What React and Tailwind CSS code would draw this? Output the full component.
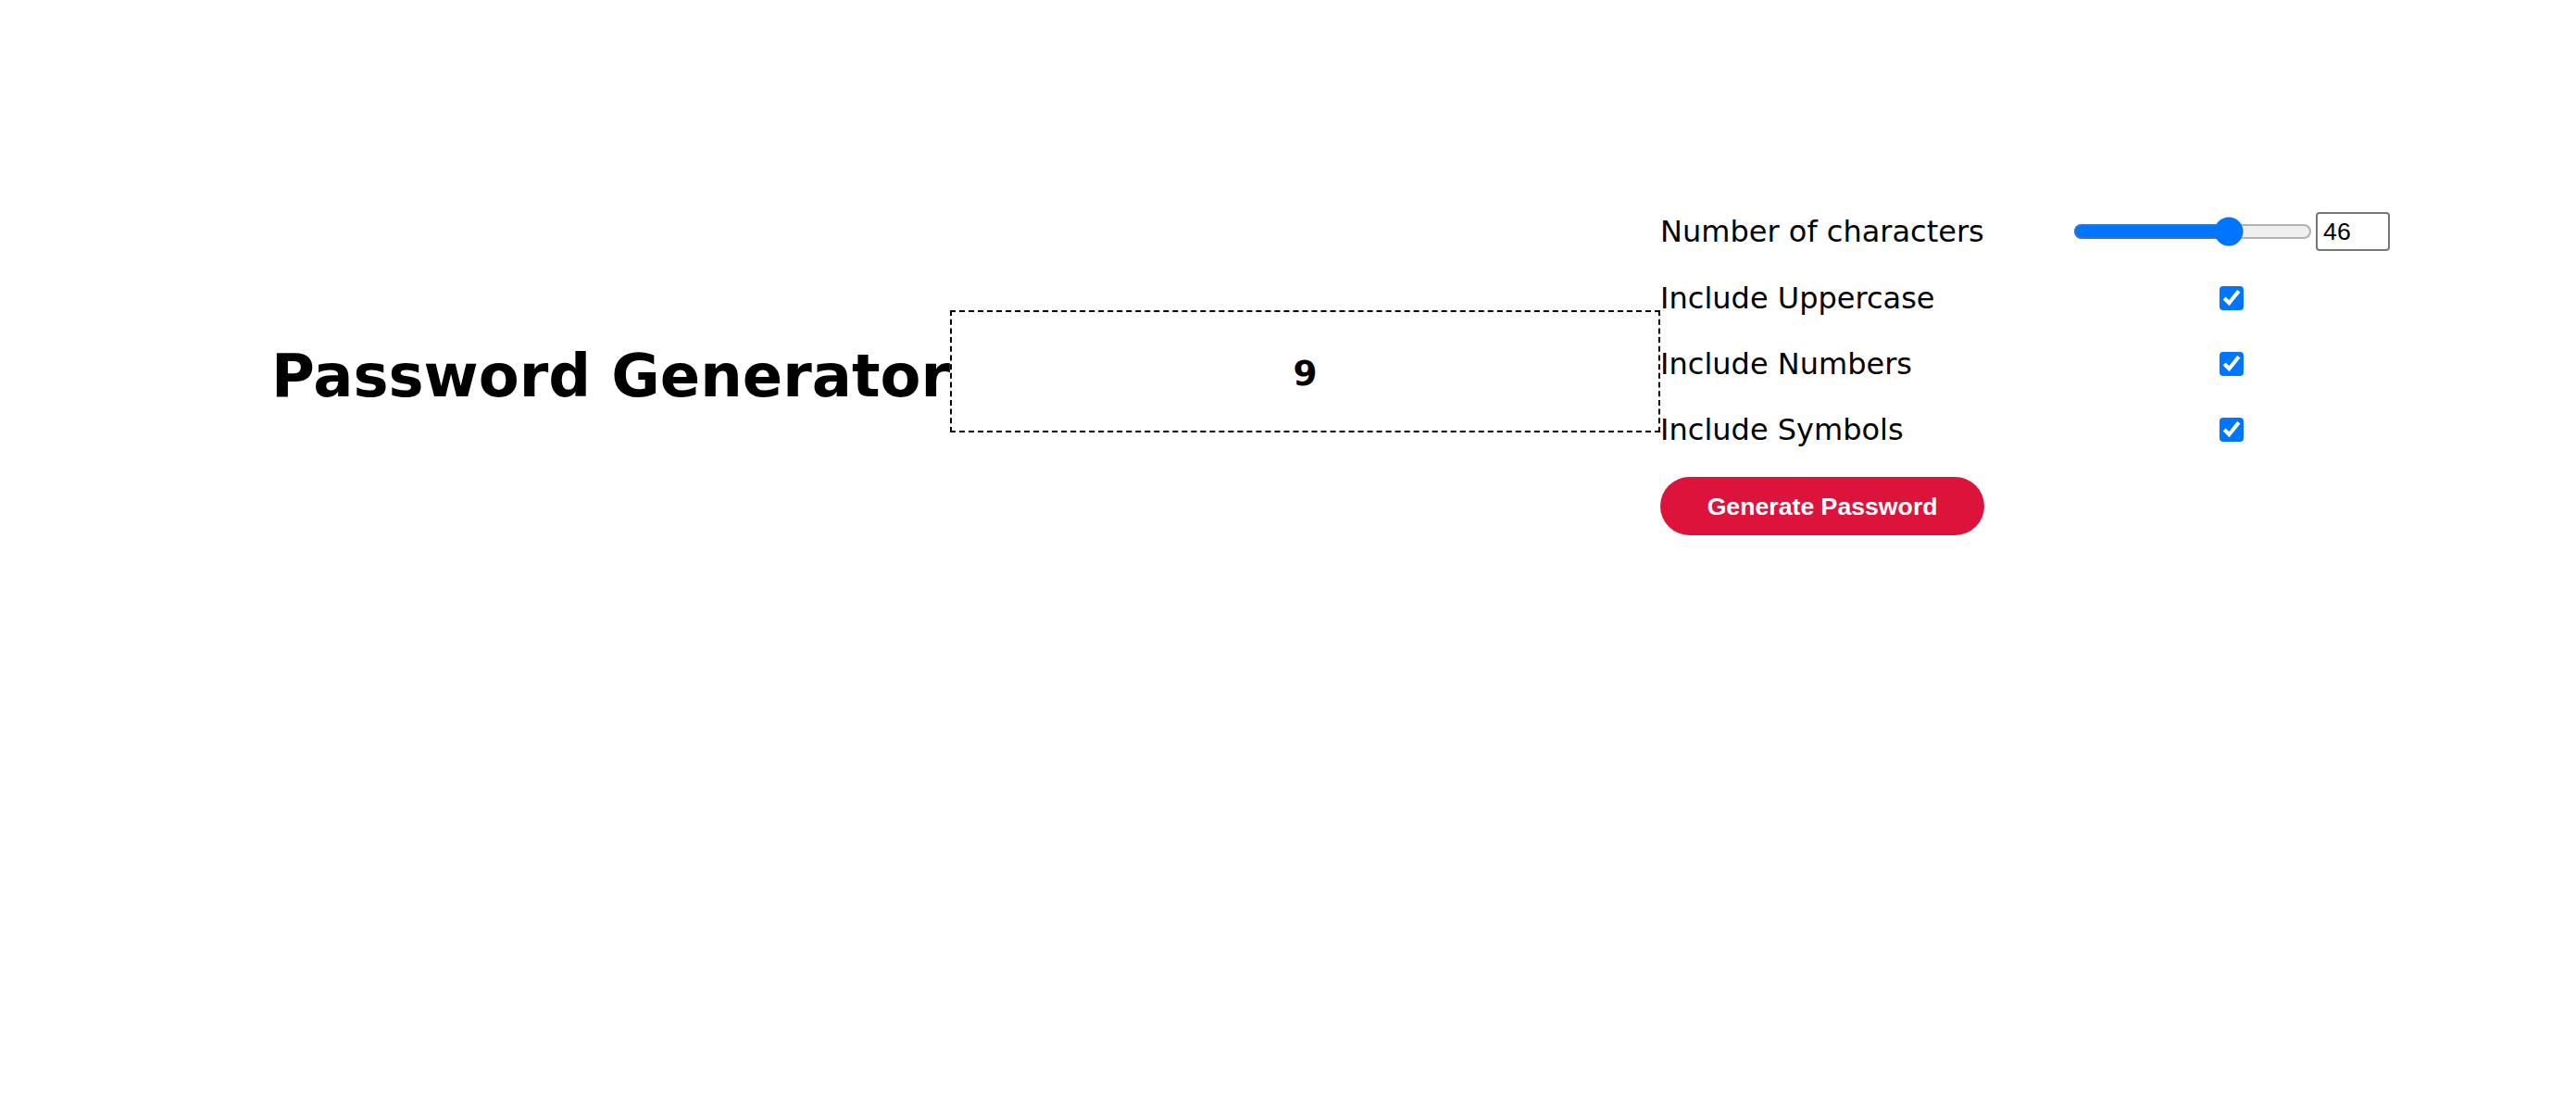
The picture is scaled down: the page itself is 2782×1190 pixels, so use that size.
const rows = ["Include Uppercase", "Include Numbers", "Include Symbols"];

const App = () => {
    return (
        <div className="min-h-screen bg-white text-black font-['DejaVu_Sans',sans-serif]">
            <div className="flex items-start pl-[293px] pt-[212px]">
                <h1 className="mt-[157px] text-[64px] font-bold leading-[74px] whitespace-nowrap">Password Generator</h1>
                <div className="mt-[123px] flex h-[132px] w-[767px] shrink-0 items-center justify-center border-2 border-dashed border-black pt-[5px]">
                    <h3 className="text-[37.44px] font-bold">9</h3>
                </div>
                <div className="mt-[2px] flex flex-col">
                    <div className="grid h-[72px] grid-cols-[441px_352px] items-center">
                        <p className="text-[32px] whitespace-nowrap">Number of characters</p>
                        <div className="flex items-center justify-center">
                            <input type="range" min="1" max="68" defaultValue="46" className="[zoom:2]" />
                            <input
                                type="number"
                                defaultValue="46"
                                className="ml-[4px] h-[42px] w-[80px] rounded-[4px] border-2 border-[#767676] px-[6px] text-[26.67px] font-['Liberation_Sans',Arial,sans-serif] [appearance:textfield]"
                            />
                        </div>
                    </div>
                    {rows.map((label) => (
                        <div key={label} className="grid h-[71px] grid-cols-[441px_352px] items-center">
                            <p className="text-[32px] whitespace-nowrap">{label}</p>
                            <div className="flex items-center justify-center">
                                <input type="checkbox" defaultChecked className="[zoom:2]" />
                            </div>
                        </div>
                    ))}
                    <button className="mt-[16px] h-[63px] w-[350px] rounded-full bg-[#dc143c] text-[26.67px] font-bold text-white font-['Liberation_Sans',Arial,sans-serif]">
                        Generate Password
                    </button>
                </div>
            </div>
        </div>
    );
};

export default App;
